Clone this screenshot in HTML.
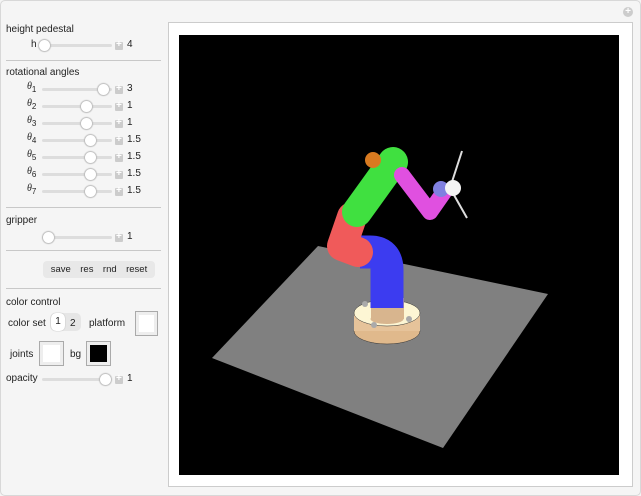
<!DOCTYPE html>
<html><head><style>
body{margin:0;width:641px;height:496px;background:#f4f4f4;font-family:"Liberation Sans",sans-serif;font-size:10px;color:#222;position:relative;overflow:hidden}
.a{position:absolute}
.frame{left:0;top:0;width:639px;height:494px;border:1px solid #d8d8d8;border-radius:5px;background:#f5f5f5}
.sep{position:absolute;left:6px;width:155px;height:1px;background:#c8c8c8}
.track{position:absolute;height:3px;background:#ddd;border-radius:2px}
.knob{position:absolute;width:11px;height:11px;border-radius:50%;background:#fff;box-shadow:0 0 1px 1px #bbb;top:-4px}
.plus{position:absolute;width:8px;height:8px;background:#ccc;border-radius:1px}
.plus:after{content:"+";position:absolute;left:1px;top:-3px;font-size:10px;color:#fff;font-weight:bold}
.sw{position:absolute;width:22px;height:22px;border:1px solid #aaa;background:#eee;box-sizing:border-box;padding:3px}
.sw div{width:100%;height:100%}
i{font-family:"Liberation Serif",serif}
</style></head><body>
<div class="a frame"></div>
<div class="a" style="left:623px;top:7px;width:10px;height:10px;border-radius:50%;background:#ccc;color:#fff;font-size:10px;line-height:10px;text-align:center;font-weight:bold">+</div>
<div class="a" style="left:168px;top:22px;width:465px;height:465px;background:#fff;border:1px solid #ccc;box-sizing:border-box"></div>
<div class="a" style="left:179px;top:35px;width:440px;height:440px;background:#000"></div>

<div class="a" style="left:6px;top:24px">height pedestal</div>
<div class="a" style="left:31px;top:39px">h</div>
<div class="sep" style="top:60px"></div>
<div class="a" style="left:6px;top:67px">rotational angles</div>
<div class="sep" style="top:207px"></div>
<div class="a" style="left:6px;top:215px">gripper</div>
<div class="sep" style="top:250px"></div>
<div class="sep" style="top:288px"></div>
<div class="a" style="left:6px;top:297px">color control</div>

<div id="sl"></div>
<script>
var rows=[[44,44,'','4'],[88,103,'1','3'],[105,86,'2','1'],[122,86,'3','1'],[139,90,'4','1.5'],[156,90,'5','1.5'],[173,90,'6','1.5'],[190,90,'7','1.5'],[236,48,'g','1'],[378,105,'o','1']];
var h='';
rows.forEach(function(r){var y=r[0];
h+='<div class="track" style="left:42px;width:70px;top:'+y+'px"><div class="knob" style="left:'+(r[1]-47)+'px"></div></div>';
h+='<div class="plus" style="left:115px;top:'+(y-2)+'px"></div><div class="a" style="left:127px;top:'+(y-5)+'px">'+r[3]+'</div>';
if(r[2]>='1'&&r[2]<='7')h+='<div class="a" style="left:27px;top:'+(y-7)+'px"><i>θ</i><sub style="font-size:8px">'+r[2]+'</sub></div>';
});
document.getElementById('sl').innerHTML=h;
</script>
<div class="a" style="left:6px;top:373px">opacity</div>

<div class="a" style="left:43px;top:261px;width:112px;height:17px;background:#e8e8e8;border-radius:4px;font-size:9.5px;line-height:17px;display:flex;justify-content:space-around;padding:0 3px;box-sizing:border-box"><span>save</span><span>res</span><span>rnd</span><span>reset</span></div>

<div class="a" style="left:8px;top:318px">color set</div>
<div class="a" style="left:50px;top:313px;width:31px;height:18px;background:#e6e6e6;border-radius:5px"></div>
<div class="a" style="left:51px;top:313px;width:14px;height:18px;background:#fff;border-radius:5px;box-shadow:0 0 1px #999;text-align:center;line-height:18px">1</div>
<div class="a" style="left:70px;top:318px">2</div>
<div class="a" style="left:89px;top:318px">platform</div>
<div class="sw" style="left:135px;top:311px;width:23px;height:25px"><div style="background:#fff"></div></div>
<div class="a" style="left:10px;top:349px">joints</div>
<div class="sw" style="left:39px;top:341px;width:25px;height:25px"><div style="background:#fff"></div></div>
<div class="a" style="left:70px;top:349px">bg</div>
<div class="sw" style="left:86px;top:341px;width:25px;height:25px"><div style="background:#000"></div></div>

<svg class="a" style="left:0;top:0" width="641" height="496">
<polygon points="212,358 318,246 548,294 443,448" fill="#808080"/>
<ellipse cx="387" cy="331" rx="33" ry="13" fill="#e0b98c" stroke="#333" stroke-width=".5"/>
<rect x="354" y="313" width="66" height="18" fill="#e6c39a"/>
<ellipse cx="387" cy="313" rx="33" ry="13" fill="#fdf6d4" stroke="#333" stroke-width=".5"/>
<rect x="371" y="298" width="33" height="21" fill="#d8b58e"/>
<ellipse cx="387" cy="319" rx="16.5" ry="5" fill="#d8b58e"/>
<circle cx="365" cy="304" r="3" fill="#aaa"/><circle cx="374" cy="325" r="3" fill="#aaa"/><circle cx="409" cy="319" r="3" fill="#aaa"/>
<path d="M387 308 L387 270 Q387 252 370 252 L360 252" stroke="#3c3cf0" stroke-width="33" fill="none"/>
<path d="M358 252 L342 246 L352 217" stroke="#f05a5a" stroke-width="30" fill="none" stroke-linejoin="round" stroke-linecap="round"/>
<path d="M357 212 L393 162" stroke="#40e040" stroke-width="30" stroke-linecap="round"/>
<circle cx="373" cy="160" r="8" fill="#d87a20"/>
<path d="M402 175 L430 212 L444 192" stroke="#e050e0" stroke-width="16" fill="none" stroke-linejoin="round" stroke-linecap="round"/>
<circle cx="441" cy="189" r="8" fill="#8080e0"/>
<path d="M462 151 L450 188 L467 218" stroke="#ddd" stroke-width="2" fill="none"/>
<circle cx="453" cy="188" r="8" fill="#f4f4f4"/>
</svg>
</body></html>
